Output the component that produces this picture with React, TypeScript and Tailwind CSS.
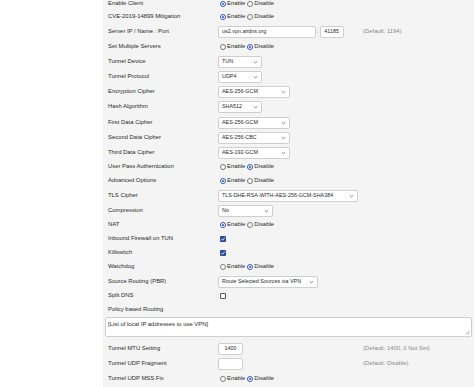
import React from "react";

const Chevron = () => (
  <svg width="5" height="4" viewBox="0 0 5 4" className="shrink-0">
    <path d="M0.8 1.2 L2.5 2.8 L4.2 1.2" fill="none" stroke="#666" strokeWidth="0.8" />
  </svg>
);

const Radio = ({ on }: { on: boolean }) => (
  <span
    className={
      on
        ? "w-[6px] h-[6px] rounded-full border border-[#2f56b8] bg-white flex items-center justify-center shrink-0"
        : "w-[6px] h-[6px] rounded-full border border-[#777] bg-white shrink-0"
    }
  >
    {on && <span className="w-[2px] h-[2px] rounded-full bg-[#2f56b8]" />}
  </span>
);

const EnableDisable = ({ enabled }: { enabled: boolean }) => (
  <div className="flex items-center ml-[2px]">
    <Radio on={enabled} />
    <span className="ml-[1px]">Enable</span>
    <span className="ml-[2px]" />
    <Radio on={!enabled} />
    <span className="ml-[1px]">Disable</span>
  </div>
);

const Select = ({ value, w }: { value: string; w: string }) => (
  <div className={`${w} h-[12px] bg-white border border-[#cfcfcf] rounded-[2px] flex items-center justify-between pl-[3px] pr-[3px] text-[5.4px]`}>
    <span className="whitespace-nowrap">{value}</span>
    <Chevron />
  </div>
);

const Check = ({ on }: { on: boolean }) =>
  on ? (
    <span className="ml-[2px] w-[6px] h-[6px] rounded-[1px] bg-[#2e4a9b] flex items-center justify-center">
      <svg width="6" height="6" viewBox="0 0 6 6">
        <path d="M1.3 3.1 L2.5 4.3 L4.8 1.6" fill="none" stroke="#fff" strokeWidth="0.9" />
      </svg>
    </span>
  ) : (
    <span className="ml-[2px] w-[6px] h-[6px] rounded-[1px] border border-[#555] bg-white" />
  );

const Row = ({
  h,
  label,
  children,
  hint,
}: {
  h: string;
  label: string;
  children?: React.ReactNode;
  hint?: string;
}) => (
  <div className={`flex items-center ${h}`}>
    <div className="w-[115px] pl-[5px] shrink-0 whitespace-nowrap">{label}</div>
    <div className="w-[145px] shrink-0 flex items-center">{children}</div>
    {hint && <div className="text-[#8a8a8a] whitespace-nowrap">{hint}</div>}
  </div>
);

export default function App() {
  return (
    <div className="w-[474px] h-[387px] overflow-hidden bg-white flex font-['Liberation_Sans',Arial,sans-serif] text-[5.9px] leading-none text-[#2a2a2a]">
      <div className="w-[103px] shrink-0 bg-white" />
      <div className="flex-1 bg-[#f4f4f4] flex flex-col -mt-[3px]">
        <Row h="h-[13px]" label="Enable Client">
          <EnableDisable enabled={true} />
        </Row>
        <Row h="h-[14px]" label="CVE-2019-14899 Mitigation">
          <EnableDisable enabled={true} />
        </Row>
        <Row h="h-[16px]" label="Server IP / Name : Port" hint="(Default: 1194)">
          <div className="w-[98px] h-[12px] bg-white border border-[#cfcfcf] rounded-[2px] flex items-center pl-[3px] whitespace-nowrap text-[5.4px]">
            us2.vpn.airdns.org
          </div>
          <span className="mx-[1px]">:</span>
          <div className="w-[24px] h-[12px] bg-white border border-[#cfcfcf] rounded-[2px] flex items-center justify-center text-[5.4px]">
            41185
          </div>
        </Row>
        <Row h="h-[14px]" label="Set Multiple Servers">
          <EnableDisable enabled={false} />
        </Row>
        <Row h="h-[15px]" label="Tunnel Device">
          <Select value="TUN" w="w-[44px]" />
        </Row>
        <Row h="h-[15px]" label="Tunnel Protocol">
          <Select value="UDP4" w="w-[44px]" />
        </Row>
        <Row h="h-[15px]" label="Encryption Cipher">
          <Select value="AES-256-GCM" w="w-[72px]" />
        </Row>
        <Row h="h-[16px]" label="Hash Algorithm">
          <Select value="SHA512" w="w-[44px]" />
        </Row>
        <Row h="h-[15px]" label="First Data Cipher">
          <Select value="AES-256-GCM" w="w-[72px]" />
        </Row>
        <Row h="h-[15px]" label="Second Data Cipher">
          <Select value="AES-256-CBC" w="w-[72px]" />
        </Row>
        <Row h="h-[15px]" label="Third Data Cipher">
          <Select value="AES-192-GCM" w="w-[72px]" />
        </Row>
        <Row h="h-[14px]" label="User Pass Authentication">
          <EnableDisable enabled={false} />
        </Row>
        <Row h="h-[14px]" label="Advanced Options">
          <EnableDisable enabled={true} />
        </Row>
        <Row h="h-[15px]" label="TLS Cipher">
          <Select value="TLS-DHE-RSA-WITH-AES-256-GCM-SHA384" w="w-[140px]" />
        </Row>
        <Row h="h-[15px]" label="Compression">
          <Select value="No" w="w-[55px]" />
        </Row>
        <Row h="h-[14px]" label="NAT">
          <EnableDisable enabled={true} />
        </Row>
        <Row h="h-[14px]" label="Inbound Firewall on TUN">
          <Check on={true} />
        </Row>
        <Row h="h-[14px]" label="Killswitch">
          <Check on={true} />
        </Row>
        <Row h="h-[14px]" label="Watchdog">
          <EnableDisable enabled={false} />
        </Row>
        <Row h="h-[15px]" label="Source Routing (PBR)">
          <Select value="Route Selected Sources via VPN" w="w-[100px]" />
        </Row>
        <Row h="h-[14px]" label="Split DNS">
          <Check on={false} />
        </Row>
        <Row h="h-[14px]" label="Policy based Routing" />
        <div className="mx-[2px] h-[20px] bg-white border border-[#cfcfcf] rounded-[2px] relative pl-[2px] pt-[4px]">
          [List of local IP addresses to use VPN]
          <svg width="5" height="5" viewBox="0 0 5 5" className="absolute right-[1px] bottom-[1px]">
            <path d="M4.5 0.5 L0.5 4.5 M4.5 2 L2 4.5 M4.5 3.5 L3.5 4.5" stroke="#999" strokeWidth="0.6" />
          </svg>
        </div>
        <div className="h-[4px]" />
        <Row h="h-[15px]" label="Tunnel MTU Setting" hint="(Default: 1400, 0 Not Set)">
          <div className="w-[25px] h-[12px] bg-white border border-[#cfcfcf] rounded-[2px] flex items-center justify-center text-[5.4px]">
            1400
          </div>
        </Row>
        <Row h="h-[15px]" label="Tunnel UDP Fragment" hint="(Default: Disable)">
          <div className="w-[25px] h-[12px] bg-white border border-[#cfcfcf] rounded-[2px]" />
        </Row>
        <Row h="h-[16px]" label="Tunnel UDP MSS Fix">
          <EnableDisable enabled={false} />
        </Row>
      </div>
    </div>
  );
}
